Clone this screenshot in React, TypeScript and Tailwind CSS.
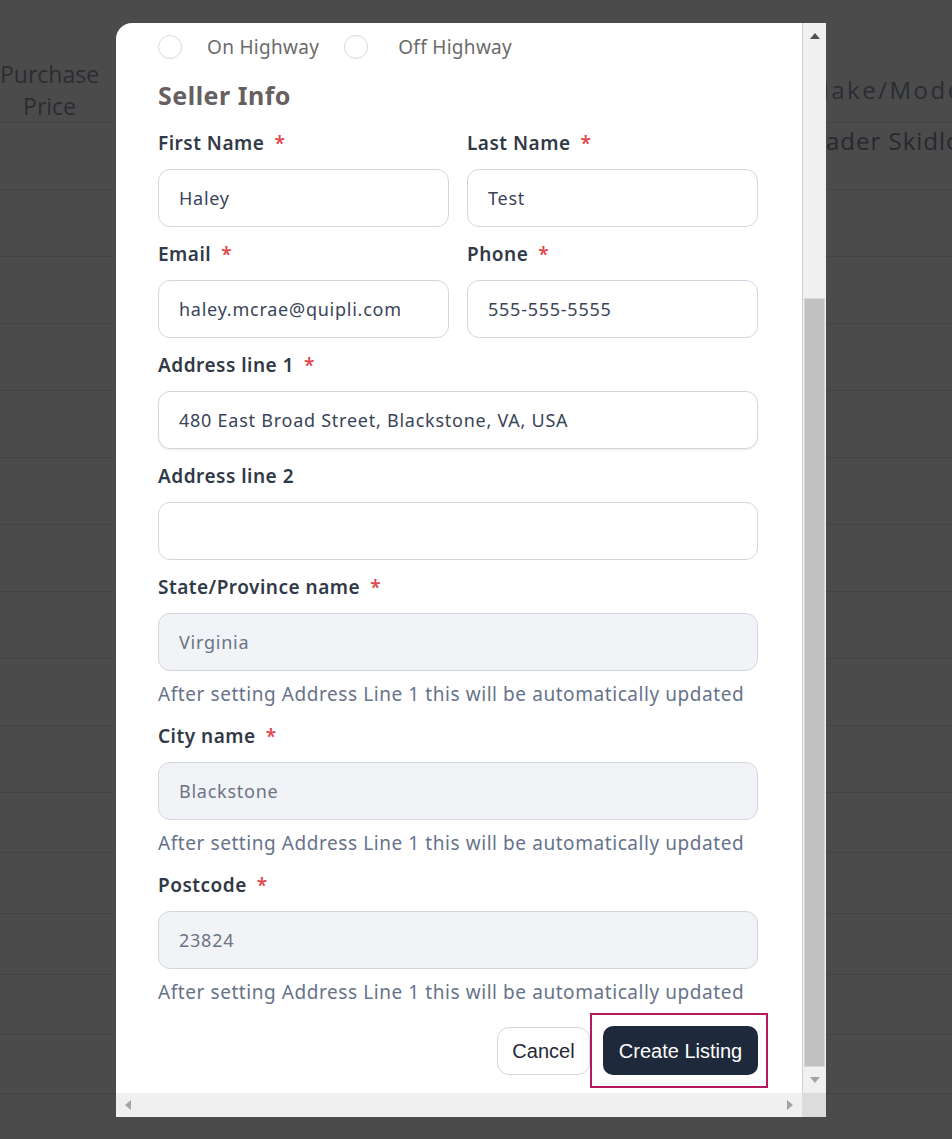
import React from "react";

const font = { fontFamily: '"Noto Sans", "Open Sans", sans-serif' };

function Field({
  label,
  value,
  required,
  disabled,
  helper,
  shadow,
}: {
  label: string;
  value: string;
  required?: boolean;
  disabled?: boolean;
  helper?: boolean;
  shadow?: boolean;
}) {
  return (
    <div className="flex flex-col">
      <div className="flex h-[26px] items-center text-[19px] font-semibold leading-[26px] tracking-[0.5px] text-[#313947]">
        {label}
        {required && <span className="ml-[10px] text-[#e0474c]">*</span>}
      </div>
      <div
        className={`mt-[13px] flex h-[58px] items-center rounded-[12px] border border-[#d3d6df] px-[20px] text-[18px] tracking-[0.75px] ${
          disabled ? "bg-[#f2f3f6] text-[#6b7385]" : "bg-white text-[#3a4458]"
        } ${shadow ? "shadow-[0_1px_2px_rgba(0,0,0,0.08)]" : ""}`}
      >
        {value}
      </div>
      {helper && (
        <div className="mt-[10px] whitespace-nowrap text-[19px] leading-[26px] tracking-[0.57px] text-[#66738a]">
          After setting Address Line 1 this will be automatically updated
        </div>
      )}
    </div>
  );
}

function Radio({ label, gap }: { label: string; gap: string }) {
  return (
    <div className="flex items-center">
      <span className="h-[24px] w-[24px] rounded-full border border-[#d6d8de] bg-white" />
      <span className={`${gap} text-[19px] leading-[24px] tracking-[0.3px] text-[#6b6b6b]`}>{label}</span>
    </div>
  );
}

export default function App() {
  const rows = [67, 67, 67, 67, 67, 67, 67, 67, 67, 67, 60, 61, 61, 60, 59];
  return (
    <div className="relative h-[1139px] w-[952px] overflow-hidden bg-[#4b4b4b]" style={{ fontFamily: '"Open Sans", sans-serif' }}>
      {/* page behind overlay */}
      <div className="flex h-[123px] border-b border-[#444444] text-[#2a2d33]">
        <div className="flex w-[100px] flex-col items-center pt-[58px] text-[23px] leading-[32px]">
          <span>Purchase</span>
          <span>Price</span>
        </div>
        <div className="ml-[708px] pt-[74px] text-[24px] leading-[32px] tracking-[2.5px] whitespace-nowrap">Make/Model</div>
      </div>
      {rows.map((h, i) => (
        <div key={i} className="flex border-b border-[#444444] text-[24px] text-[#26292e]" style={{ height: h }}>
          {i === 0 && (
            <div className="ml-[797px] pt-[2px] leading-[32px] tracking-[1px] whitespace-nowrap">Loader Skidloader</div>
          )}
        </div>
      ))}

      {/* modal */}
      <div className="absolute left-[116px] top-[23px] flex h-[1094px] w-[710px] flex-col overflow-hidden rounded-tl-[16px] bg-white">
        <div className="flex min-h-0 flex-1">
          <div className="flex w-[686px] flex-col pl-[42px] pr-[44px] pt-[12px]" style={font}>
            <div className="flex h-[24px] items-center gap-[25px]">
              <Radio label="On Highway" gap="ml-[25px]" />
              <Radio label="Off Highway" gap="ml-[30px]" />
            </div>
            <div className="mt-[20px] text-[25px] font-bold leading-[32px] tracking-[0.5px] text-[#676060]">Seller Info</div>
            <div className="mt-[19px] grid grid-cols-2 gap-x-[18px] gap-y-[14px]">
              <Field label="First Name" value="Haley" required />
              <Field label="Last Name" value="Test" required />
              <Field label="Email" value="haley.mcrae@quipli.com" required />
              <Field label="Phone" value="555-555-5555" required />
            </div>
            <div className="mt-[14px]">
              <Field label="Address line 1" value="480 East Broad Street, Blackstone, VA, USA" required shadow />
            </div>
            <div className="mt-[14px]">
              <Field label="Address line 2" value="" />
            </div>
            <div className="mt-[14px]">
              <Field label="State/Province name" value="Virginia" required disabled helper />
            </div>
            <div className="mt-[16px]">
              <Field label="City name" value="Blackstone" required disabled helper />
            </div>
            <div className="mt-[16px]">
              <Field label="Postcode" value="23824" required disabled helper />
            </div>
            <div
              className="mt-[21px] flex items-center justify-end gap-[13px]"
              style={{ fontFamily: '"Liberation Sans", Arial, sans-serif' }}
            >
              <button className="h-[48px] w-[93px] rounded-[12px] border border-[#d3d6df] bg-white text-[20px] text-[#1f2937]">
                Cancel
              </button>
              <div className="relative">
                <div className="absolute -bottom-[13px] -left-[13px] -right-[10px] -top-[13px] border-2 border-[#b4195f]" />
                <button className="relative h-[49px] w-[155px] rounded-[10px] bg-[#1e293b] text-[20px] text-white">
                  Create Listing
                </button>
              </div>
            </div>
          </div>
          {/* vertical scrollbar */}
          <div className="flex w-[24px] flex-col border-l border-[#cfcfcf] bg-[#f0f0f0]">
            <div className="flex h-[26px] items-center justify-center">
              <svg width="10" height="6" viewBox="0 0 10 6">
                <path d="M0 6 L5 0 L10 6 Z" fill="#505050" />
              </svg>
            </div>
            <div className="h-[249px]" />
            <div className="mx-[1px] flex-1 border border-[#d6d6d6] bg-[#c1c1c1]" />
            <div className="flex h-[26px] items-center justify-center">
              <svg width="10" height="6" viewBox="0 0 10 6">
                <path d="M0 0 L10 0 L5 6 Z" fill="#a3a3a3" />
              </svg>
            </div>
          </div>
        </div>
        {/* horizontal scrollbar */}
        <div className="flex h-[24px] shrink-0">
          <div className="flex w-[686px] items-center justify-between bg-[#f0f0f0] px-[9px]">
            <svg width="6" height="10" viewBox="0 0 6 10">
              <path d="M6 0 L6 10 L0 5 Z" fill="#a3a3a3" />
            </svg>
            <svg width="6" height="10" viewBox="0 0 6 10">
              <path d="M0 0 L0 10 L6 5 Z" fill="#a3a3a3" />
            </svg>
          </div>
          <div className="w-[24px] bg-[#dcdcdc]" />
        </div>
      </div>
    </div>
  );
}
